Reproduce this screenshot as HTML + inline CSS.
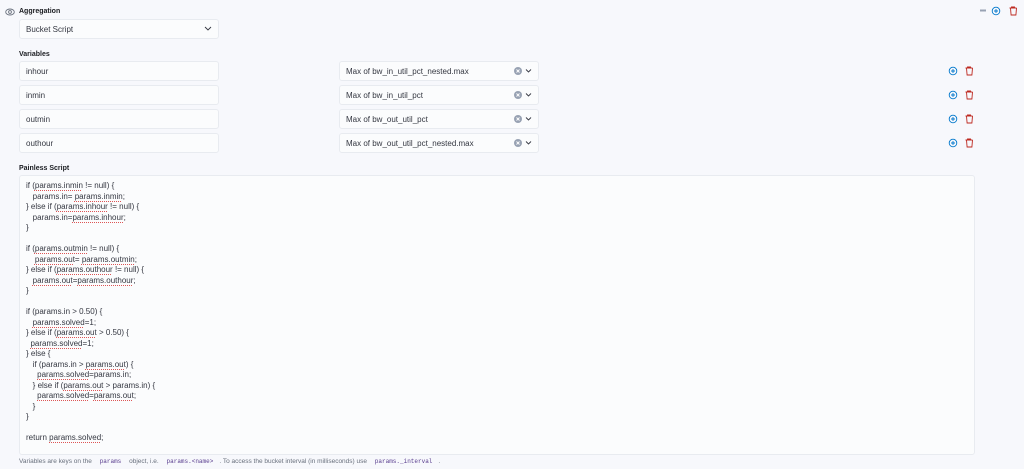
<!DOCTYPE html><html><head><style>
body{margin:0;width:1024px;height:469px;background:#f7f8fc;font-family:"Liberation Sans",sans-serif;position:relative;overflow:hidden;color:#343741}
.a{position:absolute}
.lbl{font-size:7px;font-weight:bold;color:#1a1c21}
.box{position:absolute;background:#fbfcfd;border:1px solid #e8ebf0;border-radius:3px;box-sizing:border-box;font-size:8px;padding-left:6px;padding-top:1px;color:#343741}
.code{position:absolute;left:19px;top:175px;width:956px;height:280px;background:#fbfcfd;border:1px solid #e8ebf0;border-radius:3px;box-sizing:border-box;padding:5px 0 0 6px;font-size:8px;line-height:10.5px;white-space:pre;color:#343741}
.u{text-decoration:underline dotted #d55;text-decoration-thickness:1px;text-underline-offset:1.5px}
.help{position:absolute;left:19px;top:458px;font-size:6.5px;color:#69707d}
.help code{font-family:"Liberation Mono",monospace;color:#5a3e8f;font-size:6px;padding:0 3px;margin:0 3px}
</style></head><body>
<svg class="a" style="left:5px;top:8px" width="10" height="8" viewBox="0 0 10 8"><ellipse cx="5" cy="4" rx="4.3" ry="3" fill="none" stroke="#69707d" stroke-width="0.9"/><circle cx="5" cy="4" r="1.4" fill="none" stroke="#69707d" stroke-width="0.9"/></svg>
<div class="a lbl" style="left:19px;top:8px">Aggregation</div>
<div class="box" style="left:19px;top:19px;width:200px;height:20px;line-height:18px">Bucket Script</div>
<svg class="a" style="left:204px;top:26px" width="8" height="5"><path d="M1 1l3 3 3-3" fill="none" stroke="#343741" stroke-width="0.9"/></svg>
<div class="a lbl" style="left:19px;top:51px">Variables</div>
<div class="box" style="left:19px;top:61px;width:200px;height:20px;line-height:18px">inhour</div>
<div class="box" style="left:19px;top:85px;width:200px;height:20px;line-height:18px">inmin</div>
<div class="box" style="left:19px;top:109px;width:200px;height:20px;line-height:18px">outmin</div>
<div class="box" style="left:19px;top:133px;width:200px;height:20px;line-height:18px">outhour</div>
<div class="box" style="left:339px;top:61px;width:200px;height:20px;line-height:18px">Max of bw_in_util_pct_nested.max</div>
<div class="box" style="left:339px;top:85px;width:200px;height:20px;line-height:18px">Max of bw_in_util_pct</div>
<div class="box" style="left:339px;top:109px;width:200px;height:20px;line-height:18px">Max of bw_out_util_pct</div>
<div class="box" style="left:339px;top:133px;width:200px;height:20px;line-height:18px">Max of bw_out_util_pct_nested.max</div>
<svg class="a" style="left:0;top:0" width="1024" height="160">
<g id="r">
<circle cx="518" cy="71" r="4" fill="#98a2b3"/><path d="M516.5 69.5l3 3M519.5 69.5l-3 3" stroke="#fff" stroke-width="0.9"/>
<path d="M526 69.5l2.5 2.5 2.5-2.5" fill="none" stroke="#343741" stroke-width="0.9"/>
<circle cx="953" cy="71" r="3.8" fill="none" stroke="#0077cc" stroke-width="0.9"/><path d="M953 69v4M951 71h4" stroke="#0077cc" stroke-width="0.9"/>
<path d="M965.5 68h7M967.5 68v-1h3v1M966.5 68l.6 7h4.8l.6-7" fill="none" stroke="#bd271e" stroke-width="0.9"/>
</g>
<use href="#r" y="24"/><use href="#r" y="48"/><use href="#r" y="72"/>
<rect x="980" y="9.5" width="6" height="2" fill="#98a2b3"/>
<circle cx="996" cy="11" r="3.8" fill="none" stroke="#0077cc" stroke-width="0.9"/><path d="M996 9v4M994 11h4" stroke="#0077cc" stroke-width="0.9"/>
<path d="M1009.5 8h7M1011.5 8v-1h3v1M1010.5 8l.6 7h4.8l.6-7" fill="none" stroke="#bd271e" stroke-width="0.9"/>
</svg>
<div class="a lbl" style="left:19px;top:165px">Painless Script</div>
<div class="code">if (<span class="u">params.inmin</span> != null) {
   params.in= <span class="u">params.inmin</span>;
} else if (<span class="u">params.inhour</span> != null) {
   params.in=<span class="u">params.inhour</span>;
}

if (<span class="u">params.outmin</span> != null) {
    <span class="u">params.out</span>= <span class="u">params.outmin</span>;
} else if (<span class="u">params.outhour</span> != null) {
   <span class="u">params.out</span>=<span class="u">params.outhour</span>;
}

if (params.in &gt; 0.50) {
   <span class="u">params.solved</span>=1;
} else if (<span class="u">params.out</span> &gt; 0.50) {
  <span class="u">params.solved</span>=1;
} else {
   if (params.in &gt; <span class="u">params.out</span>) {
     <span class="u">params.solved</span>=params.in;
   } else if (<span class="u">params.out</span> &gt; params.in) {
     <span class="u">params.solved</span>=<span class="u">params.out</span>;
   }
}

return <span class="u">params.solved</span>;</div>
<div class="help">Variables are keys on the <code>params</code> object, i.e. <code>params.&lt;name&gt;</code>. To access the bucket interval (in milliseconds) use <code>params._interval</code>.</div>
</body></html>
